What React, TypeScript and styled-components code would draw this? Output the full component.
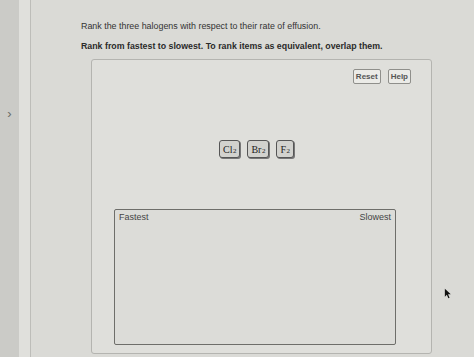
import React from 'react';
import styled, { createGlobalStyle } from 'styled-components';

const GlobalStyle = createGlobalStyle`
  html, body {
    margin: 0;
    padding: 0;
    background: #d9d9d5;
    font-family: "Liberation Sans", Arial, sans-serif;
    overflow: hidden;
  }
`;

function App() {
    return (
        <>
            <GlobalStyle />
            <Page>
                <Rail>
                    <RailArrow>›</RailArrow>
                </Rail>
                <RailEdge />
                <Main>
                    <Prompt>Rank the three halogens with respect to their rate of effusion.</Prompt>
                    <Instruction>Rank from fastest to slowest. To rank items as equivalent, overlap them.</Instruction>
                    <Panel>
                        <Toolbar>
                            <ToolButton>Reset</ToolButton>
                            <ToolButton>Help</ToolButton>
                        </Toolbar>
                        <ChipRow>
                            <Chip>Cl<Sub>2</Sub></Chip>
                            <Chip>Br<Sub>2</Sub></Chip>
                            <Chip>F<Sub>2</Sub></Chip>
                        </ChipRow>
                        <DropZone>
                            <ZoneHeader>
                                <span>Fastest</span>
                                <span>Slowest</span>
                            </ZoneHeader>
                        </DropZone>
                    </Panel>
                </Main>
                <Cursor viewBox="0 0 10 14">
                    <path d="M1 1 L1 11 L3.5 8.5 L5.5 13 L7 12.3 L5 8 L8.5 8 Z" fill="#111" />
                </Cursor>
            </Page>
        </>
    )
}

const Page = styled.div`
    position: relative;
    display: flex;
    flex-direction: row;
    width: 474px;
    height: 357px;
    background: #dadad6;
`;

const Rail = styled.div`
    width: 19px;
    background: #cbcbc7;
    display: flex;
    align-items: flex-start;
    justify-content: center;
    padding-top: 107px;
    box-sizing: border-box;
`;

const RailArrow = styled.span`
    font-size: 13px;
    color: #6a6a66;
    line-height: 1;
`;

const RailEdge = styled.div`
    width: 11px;
    background: #e0e0dc;
    border-right: 1px solid #bdbdb9;
`;

const Main = styled.div`
    flex: 1;
    padding: 21px 0 0 50px;
    display: flex;
    flex-direction: column;
`;

const Prompt = styled.p`
    margin: 0;
    font-size: 8.9px;
    color: #333;
`;

const Instruction = styled.p`
    margin: 10px 0 0;
    font-size: 8.8px;
    font-weight: bold;
    color: #2a2a2a;
`;

const Panel = styled.div`
    margin: 8px 0 0 10px;
    width: 341px;
    height: 295px;
    box-sizing: border-box;
    background: #dfdfdb;
    border: 1px solid #b4b4b0;
    border-radius: 3px;
    padding: 9px 20px 8px 22px;
    display: flex;
    flex-direction: column;
`;

const Toolbar = styled.div`
    display: flex;
    justify-content: flex-end;
    gap: 7px;
`;

const ToolButton = styled.button`
    font-family: "Liberation Sans", Arial, sans-serif;
    font-size: 8px;
    font-weight: bold;
    color: #555;
    background: #ebebe7;
    border: 1px solid #8f8f8b;
    border-radius: 2px;
    padding: 2px 2px;
    height: 15px;
    line-height: 9px;
`;

const ChipRow = styled.div`
    display: flex;
    justify-content: center;
    gap: 7px;
    margin: 56px 12px 0 0;
`;

const Chip = styled.div`
    font-family: "Liberation Serif", "Times New Roman", serif;
    font-size: 10px;
    color: #222;
    background: #d2d2ce;
    border: 1px solid #555;
    border-radius: 3px;
    box-shadow: 1px 1px 0 #777;
    height: 18px;
    padding: 0 3px;
    display: flex;
    align-items: center;
    box-sizing: border-box;
`;

const Sub = styled.span`
    font-size: 7px;
    position: relative;
    top: 2px;
    margin-left: 0.5px;
`;

const DropZone = styled.div`
    margin: 51px 15px 0 0;
    flex: 1;
    border: 1px solid #6e6e6a;
    border-radius: 2px;
    background: #dcdcd8;
`;

const ZoneHeader = styled.div`
    display: flex;
    justify-content: space-between;
    padding: 2px 4px;
    font-size: 9px;
    color: #444;
`;

const Cursor = styled.svg`
    position: absolute;
    left: 444px;
    top: 288px;
    width: 8px;
    height: 11px;
`;

export default App;
